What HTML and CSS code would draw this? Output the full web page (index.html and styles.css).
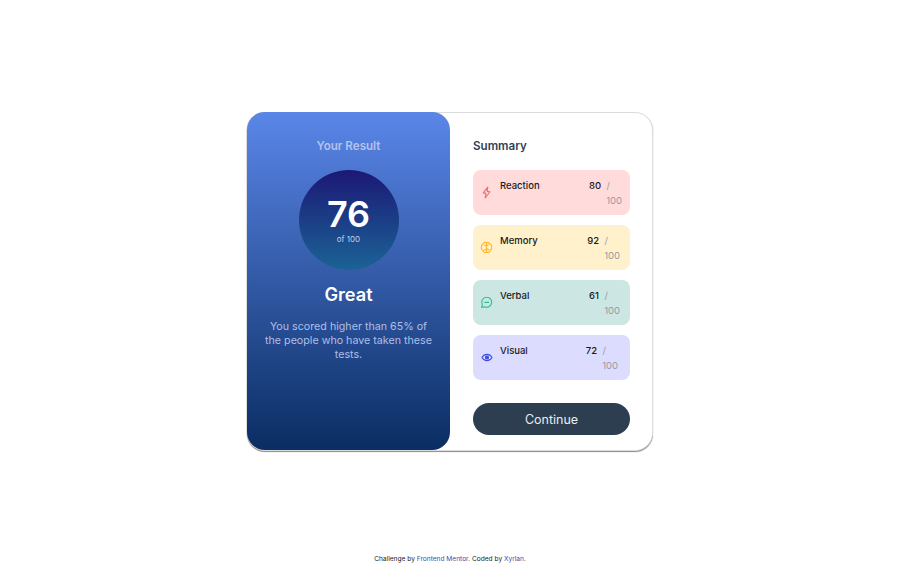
FILE: index.html
```html
<!DOCTYPE html>
<html lang="en">
<head>
<meta charset="utf-8">
<title>Results summary</title>
<link rel="stylesheet" href="styles.css">
</head>
<body>
<main class="stage">
  <section class="card">
    <div class="result">
      <h1 class="result-title">Your Result</h1>
      <div class="circle">
        <span class="circle-score">76</span>
        <span class="circle-of">of 100</span>
      </div>
      <h2 class="verdict">Great</h2>
      <p class="blurb">You scored higher than 65% of the people who have taken these tests.</p>
    </div>
    <div class="summary">
      <h2 class="summary-title">Summary</h2>
      <ul class="list">
        <li class="item item-reaction">
          <svg class="icon" viewBox="0 0 20 20" fill="none" stroke="currentColor" stroke-width="1.7" stroke-linejoin="round" stroke-linecap="round"><path d="M12 1.6 L5 10.6 L9 11.4 L8 18.4 L15.2 8.8 L11 8.2 Z"/></svg>
          <span class="name">Reaction</span>
          <span class="score"><span class="score-top">80 <i class="slash">/</i></span><span class="score-max">100</span></span>
        </li>
        <li class="item item-memory">
          <svg class="icon" viewBox="0 0 20 20" fill="none" stroke="currentColor" stroke-width="1.7" stroke-linejoin="round" stroke-linecap="round"><path d="M10 2.4C7.8 1.6 5.6 2.4 5 4.4C3 5 1.8 7 2.4 9C1.6 11 2.4 13.4 4.4 14.4C4.8 16.8 7.6 18.4 10 17.4C12.4 18.4 15.2 16.8 15.6 14.4C17.6 13.4 18.4 11 17.6 9C18.2 7 17 5 15 4.4C14.4 2.4 12.2 1.6 10 2.4Z"/><path d="M10 2.4V17.4M10 8.4 L7 6.4M10 12.4 L6.6 14M10 7.4 L13 5.8M10 11.6 L13.6 13.4"/></svg>
          <span class="name">Memory</span>
          <span class="score"><span class="score-top">92 <i class="slash">/</i></span><span class="score-max">100</span></span>
        </li>
        <li class="item item-verbal">
          <svg class="icon" viewBox="0 0 20 20" fill="none" stroke="currentColor" stroke-width="1.7" stroke-linejoin="round" stroke-linecap="round"><path d="M10.4 2a7.6 7.6 0 1 1 -3.4 14.4 L2.4 17.8 L3.6 13.4 A7.6 7.6 0 0 1 10.4 2Z"/><path d="M7.2 9.8h6.2"/></svg>
          <span class="name">Verbal</span>
          <span class="score"><span class="score-top">61 <i class="slash">/</i></span><span class="score-max">100</span></span>
        </li>
        <li class="item item-visual">
          <svg class="icon icon-eye" viewBox="0 0 20 20" fill="none" stroke="currentColor" stroke-width="1.7" stroke-linejoin="round" stroke-linecap="round"><path d="M1.6 10 C4 5.8 7 4.8 10 4.8 S16 5.8 18.4 10 C16 14.2 13 15.2 10 15.2 S4 14.2 1.6 10Z"/><circle cx="10" cy="10" r="2.6" fill="currentColor"/></svg>
          <span class="name">Visual</span>
          <span class="score"><span class="score-top">72 <i class="slash">/</i></span><span class="score-max">100</span></span>
        </li>
      </ul>
      <button class="continue" type="button">Continue</button>
    </div>
  </section>
</main>
<footer class="credit">Challenge by <a href="#">Frontend Mentor</a>. Coded by <a href="#">Xyrlan</a>.</footer>
</body>
</html>
```

FILE: styles.css
```css
* { box-sizing: border-box; }
html, body { height: 100%; }
body {
  margin: 0;
  background: #fff;
  font-family: "Inter", "Liberation Sans", sans-serif;
  display: flex;
  flex-direction: column;
  overflow: hidden;
}
.stage {
  height: 563px;
  flex: none;
  display: flex;
  justify-content: center;
  padding-top: 112px;
}
.card {
  width: 406px;
  height: 339px;
  display: flex;
  border: 1px solid #dcdcdc;
  border-radius: 18px;
  box-shadow: 0 1px 1px #8a8a8a;
  background: #fff;
}
.result {
  width: 203px;
  margin: -1px 0 0 -1px;
  border-radius: 18px;
  background: linear-gradient(180deg, #5a86e8 0%, #0a2d62 100%);
  box-shadow: -0.5px 0 0 #c8c8c8;
  display: flex;
  flex-direction: column;
  align-items: center;
  color: #fff;
  text-align: center;
}
.result-title {
  margin: 26px 0 0;
  font-size: 11.6px;
  line-height: 16px;
  font-weight: 600;
  color: #b4c2ee;
}
.circle {
  width: 100px;
  height: 100px;
  margin-top: 16px;
  border-radius: 50%;
  background: linear-gradient(180deg, #1c1875 0%, #1b6396 100%);
  display: flex;
  flex-direction: column;
  align-items: center;
}
.circle-score {
  margin-top: 24px;
  font-size: 36px;
  line-height: 40px;
  font-weight: 600;
}
.circle-of {
  font-size: 8px;
  line-height: 11px;
  color: #c4d0f0;
}
.verdict {
  margin: 13px 0 0;
  font-size: 18.2px;
  line-height: 22px;
  font-weight: 600;
}
.blurb {
  margin: 15px 0 0;
  width: 175px;
  font-size: 10.7px;
  line-height: 14px;
  font-weight: 400;
  color: #b0bee8;
}
.summary {
  flex: 1;
  padding: 25px 22px 0 23px;
  display: flex;
  flex-direction: column;
}
.summary-title {
  margin: 0;
  font-size: 11.6px;
  line-height: 16px;
  font-weight: 600;
  color: #2f3f55;
}
.list {
  list-style: none;
  margin: 16px 0 0;
  padding: 0;
  display: flex;
  flex-direction: column;
  gap: 10px;
}
.item {
  height: 45px;
  border-radius: 8px;
  display: flex;
  align-items: flex-start;
  padding: 8px 8px 0 7px;
  font-size: 9.5px;
  line-height: 15px;
  color: #1a1a1a;
}
.icon {
  width: 13px;
  height: 13px;
  flex: none;
  margin-top: 8px;
}
.name { margin-left: 7px; font-weight: 500; }
.icon-eye { width: 12px; margin-left: 1px; }
.score {
  margin-left: auto;
  display: flex;
  flex-direction: column;
  align-items: flex-end;
  font-weight: 500;
}
.score-top { margin-right: 12px; }
.slash { font-style: normal; font-weight: 400; color: #9a9da5; margin-left: 3px; }
.score-max { font-weight: 400; color: #96999f; }
.item-reaction { background: #ffdbdb; }
.item-reaction .icon { color: #f8696b; }
.item-memory { background: #fff1cc; padding-right: 10px; }
.item-memory .icon { color: #fdb832; }
.item-verbal { background: #cce6e4; padding-right: 10px; }
.item-verbal .icon { color: #2ebd9b; }
.item-visual { background: #dcdcff; padding-right: 12px; }
.item-visual .icon { color: #3e4ce0; }
.continue {
  margin-top: 23px;
  height: 32px;
  border: 0;
  border-radius: 16px;
  background: #2d3e50;
  color: #e8ecf2;
  font-family: inherit;
  font-size: 12.5px;
  padding: 0;
}
.credit {
  position: absolute;
  left: 0;
  right: 0;
  top: 553.5px;
  text-align: center;
  font-size: 6.6px;
  line-height: 10px;
  color: #1a1a1a;
}
.credit a { color: #3a4fb0; text-decoration: none; }
```
